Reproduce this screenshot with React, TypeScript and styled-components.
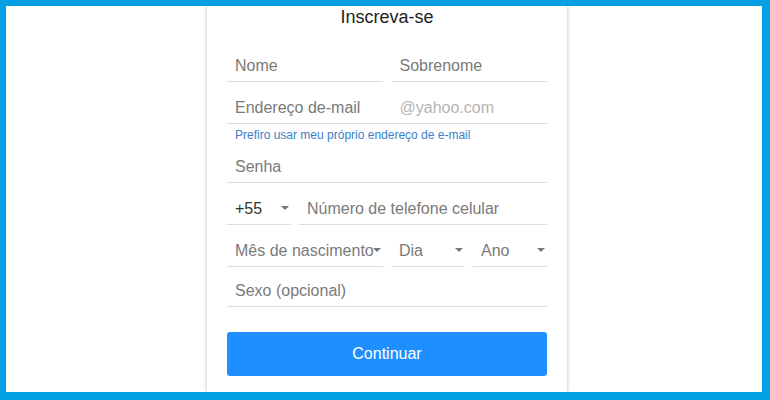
import styled, { createGlobalStyle } from "styled-components";

const GlobalStyle = createGlobalStyle`
  html, body {
    margin: 0;
    padding: 0;
    background: #fff;
    font-family: "Liberation Sans", Arial, sans-serif;
  }
`;

export default function App() {
  return (
    <>
      <GlobalStyle />
      <Frame>
        <Card>
          <Title>Inscreva-se</Title>

          <Row $cols="1fr 1fr" $gap={9}>
            <Field>Nome</Field>
            <Field>Sobrenome</Field>
          </Row>

          <EmailField>
            <EmailPart>Endereço de-mail</EmailPart>
            <EmailSuffix>@yahoo.com</EmailSuffix>
          </EmailField>
          <Hint>Prefiro usar meu próprio endereço de e-mail</Hint>

          <Row $cols="1fr" $gap={0} $top={7}>
            <Field>Senha</Field>
          </Row>

          <Row $cols="64px 1fr" $gap={8}>
            <Field $filled>
              +55
              <Arrow />
            </Field>
            <Field>Número de telefone celular</Field>
          </Row>

          <Row $cols="156px 1fr 1fr" $gap={8} $after={7}>
            <Field>
              Mês de nascimento
              <Arrow />
            </Field>
            <Field>
              Dia
              <Arrow />
            </Field>
            <Field>
              Ano
              <Arrow />
            </Field>
          </Row>

          <Row $cols="1fr" $gap={0} $after={0}>
            <Field>Sexo (opcional)</Field>
          </Row>

          <SubmitButton>Continuar</SubmitButton>
        </Card>
      </Frame>
    </>
  );
}

const Frame = styled.div`
  height: 400px;
  box-sizing: border-box;
  border-style: solid;
  border-color: #03a0e3;
  border-width: 6px 8px 8px 6px;
  overflow: hidden;
  display: flex;
  justify-content: center;
  padding-left: 6px;
`;

const Card = styled.div`
  width: 360px;
  flex-shrink: 0;
  box-sizing: border-box;
  background: #fff;
  padding: 1px 20px 40px;
  box-shadow: 0 0 4px rgba(0, 0, 0, 0.28);
`;

const Title = styled.h1`
  margin: 0 0 22px;
  text-align: center;
  font-size: 18px;
  line-height: 20px;
  font-weight: normal;
  color: #222;
`;

const Row = styled.div<{
  $cols: string;
  $gap: number;
  $top?: number;
  $after?: number;
}>`
  display: grid;
  grid-template-columns: ${(p) => p.$cols};
  column-gap: ${(p) => p.$gap}px;
  margin-top: ${(p) => p.$top ?? 0}px;
  margin-bottom: ${(p) => p.$after ?? 9}px;
`;

const Field = styled.div<{ $filled?: boolean }>`
  position: relative;
  height: 32px;
  line-height: 34px;
  padding: 0 8px;
  font-size: 16px;
  color: ${(p) => (p.$filled ? "#333" : "#7a7a7a")};
  border-bottom: 1px solid #dcdcdc;
  white-space: nowrap;
`;

const Arrow = styled.span`
  position: absolute;
  right: 2px;
  top: 14px;
  width: 0;
  height: 0;
  border-left: 4px solid transparent;
  border-right: 4px solid transparent;
  border-top: 4px solid #777;
`;

const EmailField = styled.div`
  display: grid;
  grid-template-columns: 1fr 1fr;
  column-gap: 9px;
  height: 32px;
  line-height: 34px;
  font-size: 16px;
  border-bottom: 1px solid #dcdcdc;
`;

const EmailPart = styled.span`
  padding-left: 8px;
  color: #7a7a7a;
  white-space: nowrap;
`;

const EmailSuffix = styled.span`
  padding-left: 8px;
  color: #b4b4b4;
`;

const Hint = styled.div`
  margin-top: 3px;
  padding-left: 8px;
  font-size: 12px;
  line-height: 16px;
  color: #3a7fc8;
`;

const SubmitButton = styled.button`
  display: block;
  width: 100%;
  height: 44px;
  margin-top: 25px;
  border: none;
  border-radius: 3px;
  background: #1f8fff;
  color: #fff;
  font-family: inherit;
  font-size: 16px;
`;
